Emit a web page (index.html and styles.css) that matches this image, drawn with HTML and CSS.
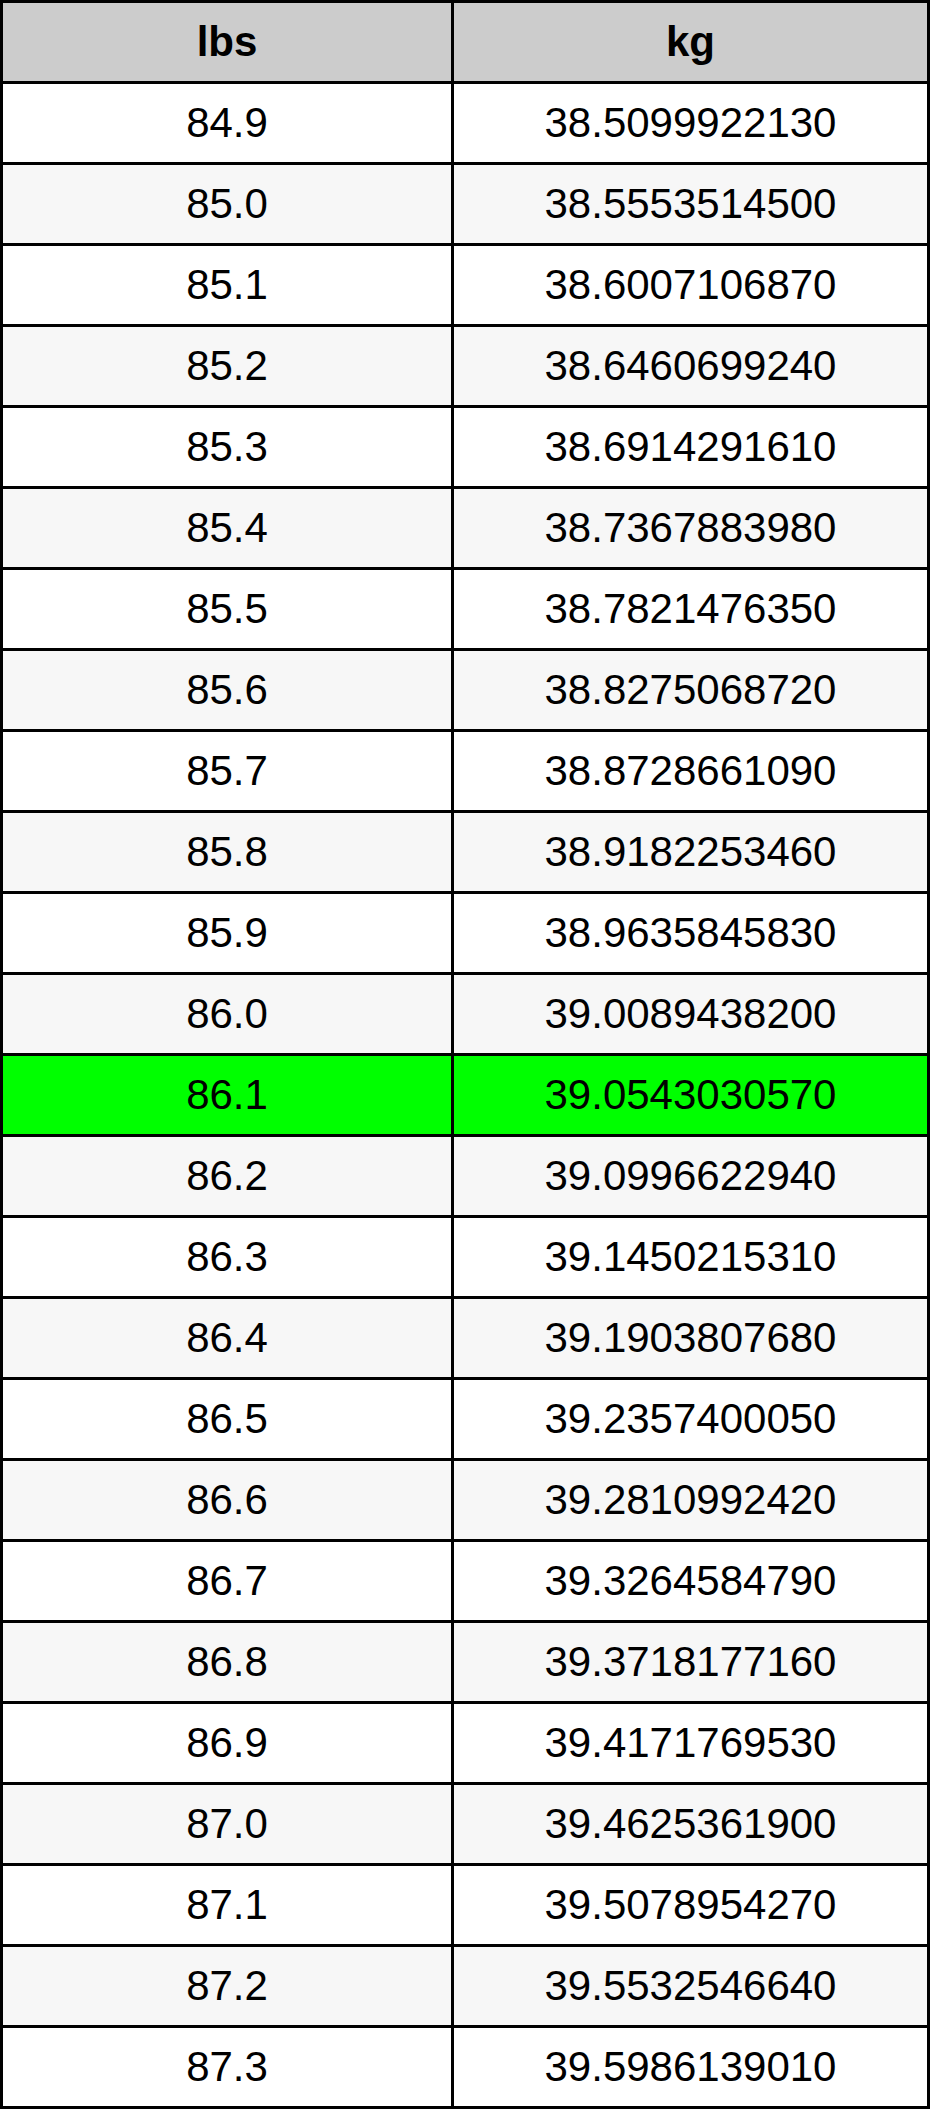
FILE: index.html
```html
<!DOCTYPE html>
<html>
<head>
<meta charset="utf-8">
<link rel="stylesheet" href="styles.css">
</head>
<body>
<table class="conv">
<colgroup><col class="c1"><col class="c2"></colgroup>
<thead><tr><th>lbs</th><th>kg</th></tr></thead>
<tbody>
<tr><td>84.9</td><td>38.5099922130</td></tr>
<tr><td>85.0</td><td>38.5553514500</td></tr>
<tr><td>85.1</td><td>38.6007106870</td></tr>
<tr><td>85.2</td><td>38.6460699240</td></tr>
<tr><td>85.3</td><td>38.6914291610</td></tr>
<tr><td>85.4</td><td>38.7367883980</td></tr>
<tr><td>85.5</td><td>38.7821476350</td></tr>
<tr><td>85.6</td><td>38.8275068720</td></tr>
<tr><td>85.7</td><td>38.8728661090</td></tr>
<tr><td>85.8</td><td>38.9182253460</td></tr>
<tr><td>85.9</td><td>38.9635845830</td></tr>
<tr><td>86.0</td><td>39.0089438200</td></tr>
<tr class="hl"><td>86.1</td><td>39.0543030570</td></tr>
<tr><td>86.2</td><td>39.0996622940</td></tr>
<tr><td>86.3</td><td>39.1450215310</td></tr>
<tr><td>86.4</td><td>39.1903807680</td></tr>
<tr><td>86.5</td><td>39.2357400050</td></tr>
<tr><td>86.6</td><td>39.2810992420</td></tr>
<tr><td>86.7</td><td>39.3264584790</td></tr>
<tr><td>86.8</td><td>39.3718177160</td></tr>
<tr><td>86.9</td><td>39.4171769530</td></tr>
<tr><td>87.0</td><td>39.4625361900</td></tr>
<tr><td>87.1</td><td>39.5078954270</td></tr>
<tr><td>87.2</td><td>39.5532546640</td></tr>
<tr><td>87.3</td><td>39.5986139010</td></tr>
</tbody>
</table>
</body>
</html>
```
FILE: styles.css
```css
html, body {
  margin: 0;
  padding: 0;
  background: #fff;
}
.conv {
  width: 930px;
  table-layout: fixed;
  border-collapse: separate;
  border-spacing: 0;
  border-top: 3px solid #000;
  border-left: 3px solid #000;
  font-family: "Liberation Sans", Arial, sans-serif;
  font-size: 42px;
  color: #000;
}
.c1 { width: 451px; }
.c2 { width: 476px; }
.conv th, .conv td {
  height: 78px;
  padding: 0;
  text-align: center;
  vertical-align: middle;
  border-right: 3px solid #000;
  border-bottom: 3px solid #000;
  box-sizing: content-box;
  line-height: 1;
}
.conv th {
  background: #cccccc;
  font-weight: bold;
}
.conv tbody tr:nth-child(odd) td { background: #ffffff; }
.conv tbody tr:nth-child(even) td { background: #f7f7f7; }
.conv tbody tr.hl td { background: #00ff00; }
```
